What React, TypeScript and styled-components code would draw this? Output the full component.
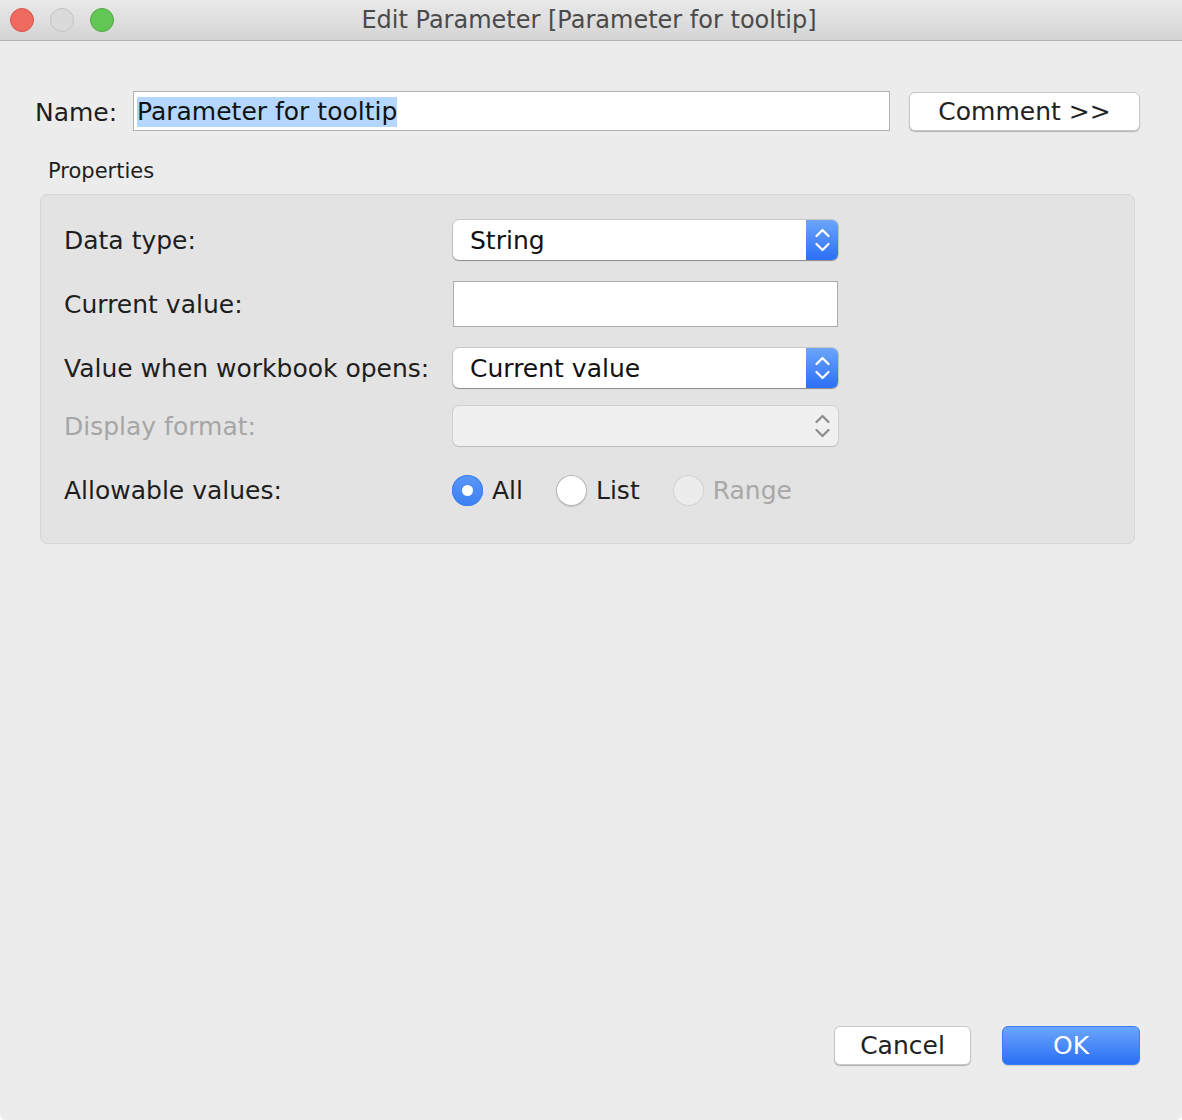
import React from "react";
import styled, { createGlobalStyle } from "styled-components";

const Global = createGlobalStyle`
  html, body { margin: 0; padding: 0; background: #ffffff; }
  body { font-family: "DejaVu Sans", "Liberation Sans", sans-serif; }
  * { box-sizing: border-box; }
`;

const Window = styled.div`
  width: 1182px;
  height: 1120px;
  background: #ececec;
  display: flex;
  flex-direction: column;
  border-radius: 0 0 6px 6px;
  overflow: hidden;
`;

const TitleBar = styled.div`
  height: 41px;
  flex: none;
  background: linear-gradient(#e9e9e9, #d4d4d4);
  border-bottom: 1px solid #b5b5b5;
  display: flex;
  align-items: center;
  position: relative;
  padding-left: 10px;
`;

const Lights = styled.div`
  display: flex;
  gap: 16px;
  align-items: center;
`;

const Light = styled.span<{ $fill: string; $edge: string }>`
  width: 24px;
  height: 24px;
  border-radius: 50%;
  background: ${(p) => p.$fill};
  border: 1px solid ${(p) => p.$edge};
`;

const Title = styled.div`
  position: absolute;
  left: 0;
  right: 0;
  top: 0;
  height: 40px;
  display: flex;
  align-items: center;
  justify-content: center;
  font-size: 24px;
  color: #4a4a4a;
  pointer-events: none;
  padding-right: 4px;
`;

const Content = styled.div`
  flex: 1;
  display: flex;
  flex-direction: column;
  padding: 50px 42px 0 35px;
`;

const NameRow = styled.div`
  display: flex;
  align-items: center;
  height: 40px;
`;

const NameLabel = styled.label`
  width: 98px;
  font-size: 25px;
  color: #1e1e1e;
  padding-top: 2px;
`;

const NameInput = styled.div`
  flex: 1;
  height: 40px;
  background: #fff;
  border: 1px solid #b2b2b2;
  display: flex;
  align-items: center;
  padding-left: 3px;
  padding-top: 2px;
  font-size: 25px;
  color: #111;
`;

const Selected = styled.span`
  background: #b3d7ff;
  line-height: 30px;
`;

const PushButton = styled.button<{ $primary?: boolean; $w: number }>`
  width: ${(p) => p.$w}px;
  height: 39px;
  border-radius: 6px;
  font-family: "DejaVu Sans", sans-serif;
  font-size: 25px;
  display: flex;
  align-items: center;
  justify-content: center;
  padding: 0;
  ${(p) =>
    p.$primary
      ? `background: linear-gradient(#6aa6fa, #2b6ef6);
         color: #fff;
         border: 1px solid #3a7ef0;
         box-shadow: 0 1px 1px rgba(0,0,0,0.15);`
      : `background: #fff;
         color: #222;
         border: 1px solid #c8c8c8;
         box-shadow: 0 1px 1px rgba(0,0,0,0.25);`}
`;

const CommentButton = styled(PushButton)`
  margin-left: 19px;
`;

const SectionTitle = styled.div`
  margin: 27px 0 0 13px;
  font-size: 21px;
  line-height: 26px;
  color: #1e1e1e;
`;

const GroupBox = styled.div`
  margin: 10px 5px 0 5px;
  height: 350px;
  background: #e3e3e3;
  border: 1px solid #d6d6d6;
  border-radius: 7px;
  padding: 25px 0 0 23px;
  display: flex;
  flex-direction: column;
`;

const FormRow = styled.div<{ $h: number; $gap: number }>`
  display: flex;
  align-items: center;
  height: ${(p) => p.$h}px;
  margin-top: ${(p) => p.$gap}px;
`;

const RowLabel = styled.div<{ $disabled?: boolean }>`
  width: 389px;
  font-size: 25px;
  color: ${(p) => (p.$disabled ? "#a6a6a6" : "#1e1e1e")};
`;

const Select = styled.div<{ $disabled?: boolean }>`
  width: 385px;
  height: 40px;
  border-radius: 6px;
  background: ${(p) => (p.$disabled ? "#f0f0f0" : "#fff")};
  box-shadow: ${(p) =>
    p.$disabled
      ? "0 0 0 1px rgba(0,0,0,0.08), 0 1px 1px rgba(0,0,0,0.1)"
      : "0 0 0 1px rgba(0,0,0,0.12), 0 1px 1px rgba(0,0,0,0.3)"};
  display: flex;
  align-items: center;
  overflow: hidden;
`;

const SelectText = styled.div`
  flex: 1;
  padding-left: 17px;
  font-size: 25px;
  color: #111;
`;

const Stepper = styled.div<{ $disabled?: boolean }>`
  width: 32px;
  height: 100%;
  display: flex;
  align-items: center;
  justify-content: center;
  background: ${(p) =>
    p.$disabled ? "transparent" : "linear-gradient(#6ba6fa, #2a6ef6)"};
  color: ${(p) => (p.$disabled ? "#8c8c8c" : "#fff")};
`;

const TextField = styled.div`
  width: 385px;
  height: 46px;
  background: #fff;
  border: 1px solid #ababab;
`;

const Radios = styled.div`
  display: flex;
  align-items: center;
  margin-left: -1px;
`;

const RadioItem = styled.div<{ $disabled?: boolean }>`
  display: flex;
  align-items: center;
  gap: 9px;
  margin-right: 33px;
  font-size: 25px;
  color: ${(p) => (p.$disabled ? "#a8a8a8" : "#1e1e1e")};
`;

const RadioCircle = styled.span<{ $checked?: boolean; $disabled?: boolean }>`
  width: 31px;
  height: 31px;
  border-radius: 50%;
  display: flex;
  align-items: center;
  justify-content: center;
  background: ${(p) =>
    p.$checked ? "linear-gradient(#5a97f6, #3c80f3)" : p.$disabled ? "#ececec" : "#fff"};
  box-shadow: ${(p) =>
    p.$checked
      ? "0 0 0 1px #3f80ee inset"
      : p.$disabled
      ? "0 0 0 1px #d2d2d2 inset"
      : "0 0 0 1px #b4b4b4 inset, 0 1px 1px rgba(0,0,0,0.15)"};
  &::after {
    content: "";
    display: ${(p) => (p.$checked ? "block" : "none")};
    width: 11px;
    height: 11px;
    border-radius: 50%;
    background: #fff;
  }
`;

const Footer = styled.div`
  margin-top: auto;
  margin-bottom: 55px;
  display: flex;
  justify-content: flex-end;
  gap: 31px;
`;

const Chevrons = () => (
  <svg width="15" height="26" viewBox="0 0 15 26" fill="none">
    <path d="M1.5 9 L7.5 3 L13.5 9" stroke="currentColor" strokeWidth="2.2" strokeLinecap="round" strokeLinejoin="round" />
    <path d="M1.5 17 L7.5 23 L13.5 17" stroke="currentColor" strokeWidth="2.2" strokeLinecap="round" strokeLinejoin="round" />
  </svg>
);

export default function App() {
  return (
    <>
      <Global />
      <Window>
        <TitleBar>
          <Lights>
            <Light $fill="#ee6a5f" $edge="#d9544b" />
            <Light $fill="#dadada" $edge="#c2c2c2" />
            <Light $fill="#62c655" $edge="#4eab40" />
          </Lights>
          <Title>Edit Parameter [Parameter for tooltip]</Title>
        </TitleBar>
        <Content>
          <NameRow>
            <NameLabel>Name:</NameLabel>
            <NameInput>
              <Selected>Parameter for tooltip</Selected>
            </NameInput>
            <CommentButton $w={231}>Comment &gt;&gt;</CommentButton>
          </NameRow>
          <SectionTitle>Properties</SectionTitle>
          <GroupBox>
            <FormRow $h={40} $gap={0}>
              <RowLabel>Data type:</RowLabel>
              <Select>
                <SelectText>String</SelectText>
                <Stepper>
                  <Chevrons />
                </Stepper>
              </Select>
            </FormRow>
            <FormRow $h={46} $gap={21}>
              <RowLabel>Current value:</RowLabel>
              <TextField />
            </FormRow>
            <FormRow $h={40} $gap={21}>
              <RowLabel>Value when workbook opens:</RowLabel>
              <Select>
                <SelectText>Current value</SelectText>
                <Stepper>
                  <Chevrons />
                </Stepper>
              </Select>
            </FormRow>
            <FormRow $h={40} $gap={18}>
              <RowLabel $disabled>Display format:</RowLabel>
              <Select $disabled>
                <SelectText />
                <Stepper $disabled>
                  <Chevrons />
                </Stepper>
              </Select>
            </FormRow>
            <FormRow $h={32} $gap={28}>
              <RowLabel>Allowable values:</RowLabel>
              <Radios>
                <RadioItem>
                  <RadioCircle $checked />
                  All
                </RadioItem>
                <RadioItem>
                  <RadioCircle />
                  List
                </RadioItem>
                <RadioItem $disabled>
                  <RadioCircle $disabled />
                  Range
                </RadioItem>
              </Radios>
            </FormRow>
          </GroupBox>
          <Footer>
            <PushButton $w={137}>Cancel</PushButton>
            <PushButton $primary $w={138}>OK</PushButton>
          </Footer>
        </Content>
      </Window>
    </>
  );
}
